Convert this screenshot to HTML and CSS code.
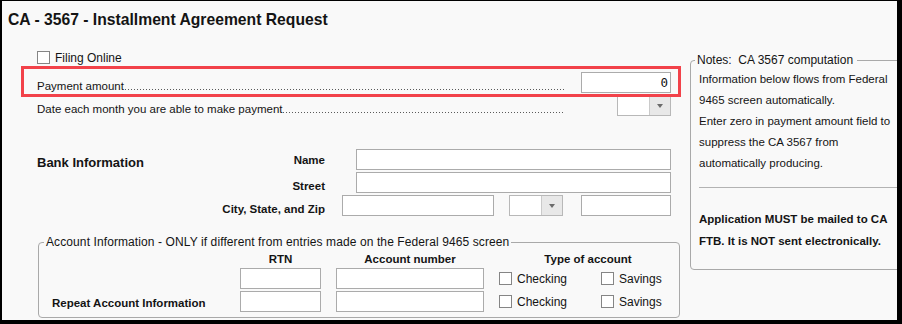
FILE: index.html
```html
<!DOCTYPE html>
<html lang="en">
<head>
    <meta charset="UTF-8">
    <meta name="viewport" content="width=device-width, initial-scale=1.0">
    <title>CA - 3567 - Installment Agreement Request</title>
    <link rel="stylesheet" href="styles.css">
</head>
<body>
    <div class="screen">
        <h1 class="screen-title">CA - 3567 - Installment Agreement Request</h1>

        <div class="screen-body">
            <div class="main">
                <label class="check-row filing">
                    <span class="check-box"></span>
                    <span>Filing Online</span>
                </label>

                <div class="line-row payment">
                    <div class="lead"><span>Payment amount</span><span class="dots"></span></div>
                    <div class="field amount">0</div>
                </div>

                <div class="line-row">
                    <div class="lead short"><span>Date each month you are able to make payment</span><span class="dots"></span></div>
                    <div class="select day"><span class="select-value"></span><span class="select-btn"></span></div>
                </div>

                <div class="bank">
                    <div class="bank-title">Bank Information</div>
                    <div class="bank-rows">
                        <div class="bank-row">
                            <span class="bank-label name-label">Name</span>
                            <div class="field bank-wide"></div>
                        </div>
                        <div class="bank-row">
                            <span class="bank-label">Street</span>
                            <div class="field bank-wide"></div>
                        </div>
                        <div class="bank-row">
                            <span class="bank-label">City, State, and Zip</span>
                            <div class="field city"></div>
                            <div class="select state"><span class="select-value"></span><span class="select-btn"></span></div>
                            <div class="field zip"></div>
                        </div>
                    </div>
                </div>

                <fieldset class="group account">
                    <legend>Account Information - ONLY if different from entries made on the Federal 9465 screen</legend>
                    <div class="account-grid">
                        <span></span>
                        <span class="col-head">RTN</span>
                        <span class="col-head">Account number</span>
                        <span class="col-head">Type of account</span>

                        <span></span>
                        <div class="field"></div>
                        <div class="field"></div>
                        <div class="account-type">
                            <label class="check-row type-check"><span class="check-box"></span><span>Checking</span></label>
                            <label class="check-row"><span class="check-box"></span><span>Savings</span></label>
                        </div>

                        <span class="repeat-label">Repeat Account Information</span>
                        <div class="field"></div>
                        <div class="field"></div>
                        <div class="account-type">
                            <label class="check-row type-check"><span class="check-box"></span><span>Checking</span></label>
                            <label class="check-row"><span class="check-box"></span><span>Savings</span></label>
                        </div>
                    </div>
                </fieldset>
            </div>

            <fieldset class="group notes">
                <legend>Notes:&nbsp; CA 3567 computation</legend>
                <p>Information below flows from Federal<br>9465 screen automatically.<br>Enter zero in payment amount field to<br>suppress the CA 3567 from<br>automatically producing.</p>
                <div class="notes-rule"></div>
                <p class="notes-warning">Application MUST be mailed to CA<br>FTB. It is NOT sent electronically.</p>
            </fieldset>
        </div>

        <!-- highlight drawn over the payment row -->
        <div class="highlight"></div>
    </div>
</body>
</html>
```

FILE: styles.css
```css
:root {
    --screen-bg: #f9f9f9;
    --text-color: #141414;
    --field-border: #ababab;
    --box-border: #858585;
    --group-border: #a9a9a9;
    --mark-color: #f2424a;
}

* {
    box-sizing: border-box;
}

body {
    margin: 0;
    background-color: #000;
    font-family: "Liberation Sans", Arial, sans-serif;
    font-size: 11.5px;
    color: var(--text-color);
}

.screen {
    position: relative;
    width: 895px;
    height: 319px;
    margin: 1px 0 0 2px;
    background-color: var(--screen-bg);
    overflow: hidden;
}

.screen-title {
    margin: 0;
    padding: 9px 0 0 6px;
    font-size: 15.7px;
    line-height: 20px;
    font-weight: bold;
}

.screen-body {
    display: flex;
    align-items: flex-start;
}

.main {
    width: 688px;
    flex: none;
    padding: 21px 0 0 35px;
}

/* inputs */
.field {
    height: 21px;
    background-color: #fff;
    border: 1px solid var(--field-border);
}

.select {
    display: flex;
    height: 21px;
    border: 1px solid #b8b8b8;
    background-color: #fff;
}

.select-value {
    flex: 1;
}

.select-btn {
    width: 21px;
    display: flex;
    align-items: center;
    justify-content: center;
    background-color: #e8e8e8;
    border-left: 1px solid #cacaca;
}

.select-btn::after {
    content: "";
    border-left: 3px solid transparent;
    border-right: 3px solid transparent;
    border-top: 4px solid #6b6b6b;
}

.check-row {
    display: flex;
    align-items: center;
    gap: 5px;
    font-size: 12px;
    line-height: 14px;
}

.check-box {
    flex: none;
    width: 13px;
    height: 13px;
    background-color: #fff;
    border: 1px solid var(--box-border);
}

/* top rows */
.filing {
    height: 13px;
}

.line-row {
    display: flex;
    align-items: flex-end;
    width: 634px;
    height: 21px;
    margin-top: 2px;
}

.line-row.payment {
    margin-top: 8px;
}

.lead {
    display: flex;
    align-items: flex-end;
    width: 529px;
    line-height: 14px;
    white-space: nowrap;
}

.lead.short {
    width: 528px;
}

.dots {
    flex: 1;
    height: 1px;
    margin: 0 0 3px 1px;
    background-image: linear-gradient(to right, #5a5a5a 1px, transparent 1px);
    background-size: 3px 1px;
    background-repeat: repeat-x;
}

.amount {
    width: 90px;
    margin-left: auto;
    display: flex;
    align-items: center;
    justify-content: flex-end;
    padding-right: 2px;
    font-family: "DejaVu Sans Mono", "Liberation Mono", monospace;
    font-size: 12.5px;
    color: #111;
}

.day {
    width: 54px;
    margin-left: auto;
}

/* bank */
.bank {
    display: flex;
    margin-top: 33px;
}

.bank-title {
    width: 150px;
    flex: none;
    padding-top: 6px;
    font-size: 13px;
    line-height: 16px;
    font-weight: bold;
}

.bank-rows {
    display: flex;
    flex-direction: column;
    gap: 2px;
}

.bank-row {
    display: flex;
    align-items: flex-end;
    height: 21px;
}

.bank-label {
    width: 138px;
    text-align: right;
    font-size: 11.5px;
    font-weight: bold;
    line-height: 14px;
}

.name-label {
    padding-bottom: 3px;
}

.bank-wide {
    width: 315px;
    margin-left: 31px;
}

.city {
    width: 152px;
    margin-left: 17px;
}

.state {
    width: 54px;
    margin-left: 15px;
}

.zip {
    width: 90px;
    margin-left: 18px;
}

/* grouped boxes */
.group {
    margin: 0;
    border: 1px solid var(--group-border);
    border-radius: 4px;
}

.group legend {
    font-size: 12px;
    line-height: 14px;
    white-space: nowrap;
}

.account {
    width: 642px;
    margin: 19px 0 0 1px;
    padding: 3px 0 5px 13px;
}

.account legend {
    margin-left: -8px;
    padding: 0 2px;
    letter-spacing: 0.1px;
}

.account-grid {
    display: grid;
    grid-template-columns: 173px 81px 148px 178px;
    grid-template-rows: 14px 21px 21px;
    column-gap: 15px;
    row-gap: 2px;
}

.col-head {
    text-align: center;
    font-size: 11.5px;
    font-weight: bold;
    line-height: 14px;
}

.repeat-label {
    align-self: end;
    padding-bottom: 2px;
    font-size: 11.5px;
    font-weight: bold;
    line-height: 14px;
}

.account-type {
    display: flex;
    align-items: center;
}

.type-check {
    width: 102px;
}

.notes {
    width: 230px;
    flex: none;
    margin-top: 23px;
    padding: 2px 0 17px 8px;
}

.notes legend {
    margin-left: -4px;
    padding: 0 4px 0 2px;
}

.notes p {
    margin: 0;
    line-height: 21px;
}

.notes-rule {
    height: 1px;
    margin-top: 13px;
    background-color: #b3b3b3;
}

.notes .notes-warning {
    margin-top: 20px;
    font-size: 11.5px;
    font-weight: bold;
    line-height: 22px;
}

.highlight {
    position: absolute;
    left: 19px;
    top: 65px;
    width: 660px;
    height: 31px;
    border: 3px solid var(--mark-color);
}
```
